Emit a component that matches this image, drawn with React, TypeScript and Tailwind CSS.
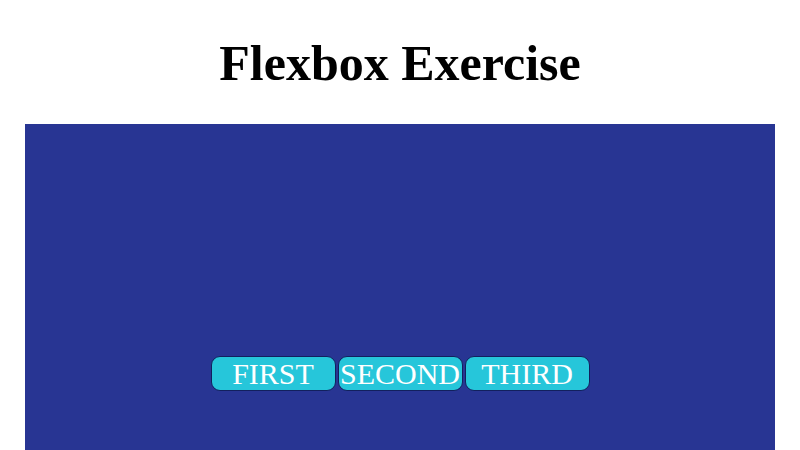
const tabs = ["FIRST", "SECOND", "THIRD"];

export default function App() {
    return (
        <div className="min-h-[450px] bg-white font-['Liberation_Serif','Times_New_Roman',serif]">
            <h1 className="pt-[35px] text-center text-[50px] font-bold leading-[57px] text-black">
                Flexbox Exercise
            </h1>

            {/* Blue stage with the row of pills */}
            <div className="mx-[25px] mt-[32px] flex h-[340px] items-start justify-center gap-[2px] bg-[#283593] pt-[232px]">
                {tabs.map((label) => (
                    <div
                        key={label}
                        className="flex h-[35px] w-[125px] items-center justify-center rounded-[9px] border border-[#12205e] bg-[#26c6da] text-[30px] leading-none text-white"
                    >
                        {label}
                    </div>
                ))}
            </div>
        </div>
    );
}
